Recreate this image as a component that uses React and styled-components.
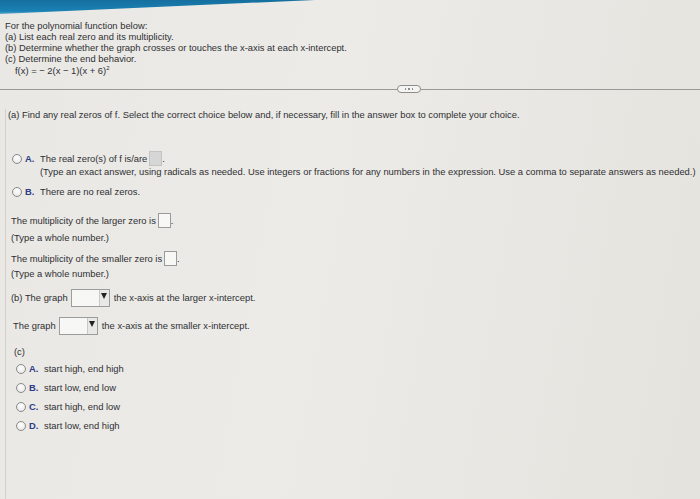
import React from 'react';
import styled, { createGlobalStyle } from 'styled-components';

const Global = createGlobalStyle`
  html, body {
    margin: 0;
    padding: 0;
    background: #e8e7e3;
  }
`;

const Page = styled.div`
  width: 700px;
  height: 499px;
  overflow: hidden;
  background: linear-gradient(100deg, #e9e8e4 0%, #ecebe7 45%, #e5e3de 100%);
  font-family: "Liberation Sans", Arial, sans-serif;
  font-size: 9.4px;
  color: #2f2f33;
`;

const TopBand = styled.div`
  height: 14px;
  background: linear-gradient(180deg, #156f9f 0%, #1a82b4 80%, #5fa9cf 100%);
  clip-path: polygon(0 0, 315px 0, 0 14px);
`;

const Intro = styled.div`
  margin-top: 6px;
  padding-left: 5px;
  line-height: 11px;
`;

const Formula = styled.div`
  padding-left: 15px;
  margin-top: 1px;
  line-height: 11px;
  sup {
    font-size: 6px;
    line-height: 0;
    vertical-align: 4px;
  }
`;

const DividerRow = styled.div`
  display: flex;
  align-items: center;
  margin-top: 9px;
  height: 8px;
`;

const Rule = styled.div`
  height: 1px;
  background: #9a9996;
  width: ${p => (p.$grow ? 'auto' : `${p.$w}px`)};
  flex: ${p => (p.$grow ? 1 : 'none')};
`;

const MorePill = styled.div`
  width: 22px;
  height: 6px;
  border: 1px solid #8d8d8d;
  border-radius: 4px;
  background: #f4f4f2;
  display: flex;
  align-items: center;
  justify-content: center;
  gap: 2px;
  span {
    width: 1.5px;
    height: 1.5px;
    border-radius: 50%;
    background: #777;
  }
`;

const Body = styled.div`
  border-left: 1px solid #d3d1cc;
  margin-left: 5px;
  height: 420px;
`;

const Line = styled.div`
  line-height: ${p => p.$lh || 11}px;
  margin-top: ${p => p.$mt || 0}px;
  padding-left: ${p => p.$x || 0}px;
  display: flex;
  align-items: center;
  white-space: nowrap;
`;

const Radio = styled.span`
  width: 8px;
  height: 8px;
  border-radius: 50%;
  border: 1px solid #8b8b8b;
  background: radial-gradient(circle at 50% 35%, #ffffff 0%, #e2e2e2 100%);
  margin-right: 3px;
  flex: none;
`;

const Letter = styled.b`
  color: #2d3a86;
  width: ${p => p.$w || 15}px;
  flex: none;
`;

const AnswerBox = styled.span`
  display: inline-block;
  width: 11px;
  height: 13px;
  margin-left: 2px;
  border: 1px solid ${p => (p.$filled ? '#c3c3c3' : '#9a9a9a')};
  background: ${p => (p.$filled ? '#d6d6d6' : '#f7f7f5')};
`;

const Select = styled.span`
  display: inline-flex;
  width: 39px;
  height: 18px;
  margin: 0 4px 0 3px;
  border: 1px solid #9c9c9c;
  background: #f7f7f5;
  justify-content: flex-end;
  box-sizing: border-box;
`;

const SelectArrow = styled.span`
  width: 9px;
  border-left: 1px solid #c9c9c9;
  background: #e8e8e6;
  display: flex;
  align-items: flex-start;
  justify-content: center;
  padding-top: 3px;
  svg {
    display: block;
  }
`;

const Dropdown = () => (
  <Select>
    <SelectArrow>
      <svg width="6" height="6" viewBox="0 0 6 6">
        <path d="M0 0 H6 L3 6 Z" fill="#222" />
      </svg>
    </SelectArrow>
  </Select>
);

const endOptions = [
  ['A.', 'start high, end high'],
  ['B.', 'start low, end low'],
  ['C.', 'start high, end low'],
  ['D.', 'start low, end high'],
];

export default function App() {
  return (
    <Page>
      <Global />
      <TopBand />
      <Intro>
        <div>For the polynomial function below:</div>
        <div>(a) List each real zero and its multiplicity.</div>
        <div>(b) Determine whether the graph crosses or touches the x-axis at each x-intercept.</div>
        <div>(c) Determine the end behavior.</div>
      </Intro>
      <Formula>
        f(x) = − 2(x − 1)(x + 6)<sup>2</sup>
      </Formula>
      <DividerRow>
        <Rule $w={397} />
        <MorePill><span /><span /><span /></MorePill>
        <Rule $grow />
      </DividerRow>
      <Body>
        <Line $mt={16} $x={2}>
          (a) Find any real zeros of f. Select the correct choice below and, if necessary, fill in the answer box to complete your choice.
        </Line>
        <Line $mt={31} $x={6} $lh={14}>
          <Radio />
          <Letter>A.</Letter>
          The real zero(s) of f is/are<AnswerBox $filled />.
        </Line>
        <Line $x={34}>
          (Type an exact answer, using radicals as needed. Use integers or fractions for any numbers in the expression. Use a comma to separate answers as needed.)
        </Line>
        <Line $mt={8} $x={6} $lh={14}>
          <Radio />
          <Letter>B.</Letter>
          There are no real zeros.
        </Line>
        <Line $mt={14} $x={5} $lh={15}>
          The multiplicity of the larger zero is<AnswerBox />.
        </Line>
        <Line $mt={4} $x={5}>(Type a whole number.)</Line>
        <Line $mt={8} $x={5} $lh={15}>
          The multiplicity of the smaller zero is<AnswerBox />.
        </Line>
        <Line $mt={2} $x={5}>(Type a whole number.)</Line>
        <Line $mt={10} $x={5} $lh={18}>
          (b) The graph<Dropdown />the x-axis at the larger x-intercept.
        </Line>
        <Line $mt={10} $x={7} $lh={18}>
          The graph<Dropdown />the x-axis at the smaller x-intercept.
        </Line>
        <Line $mt={11} $x={8}>(c)</Line>
        {endOptions.map(([letter, text], i) => (
          <Line key={letter} $mt={i === 0 ? 5 : 5} $x={10} $lh={14}>
            <Radio />
            <Letter>{letter}</Letter>
            {text}
          </Line>
        ))}
      </Body>
    </Page>
  );
}
